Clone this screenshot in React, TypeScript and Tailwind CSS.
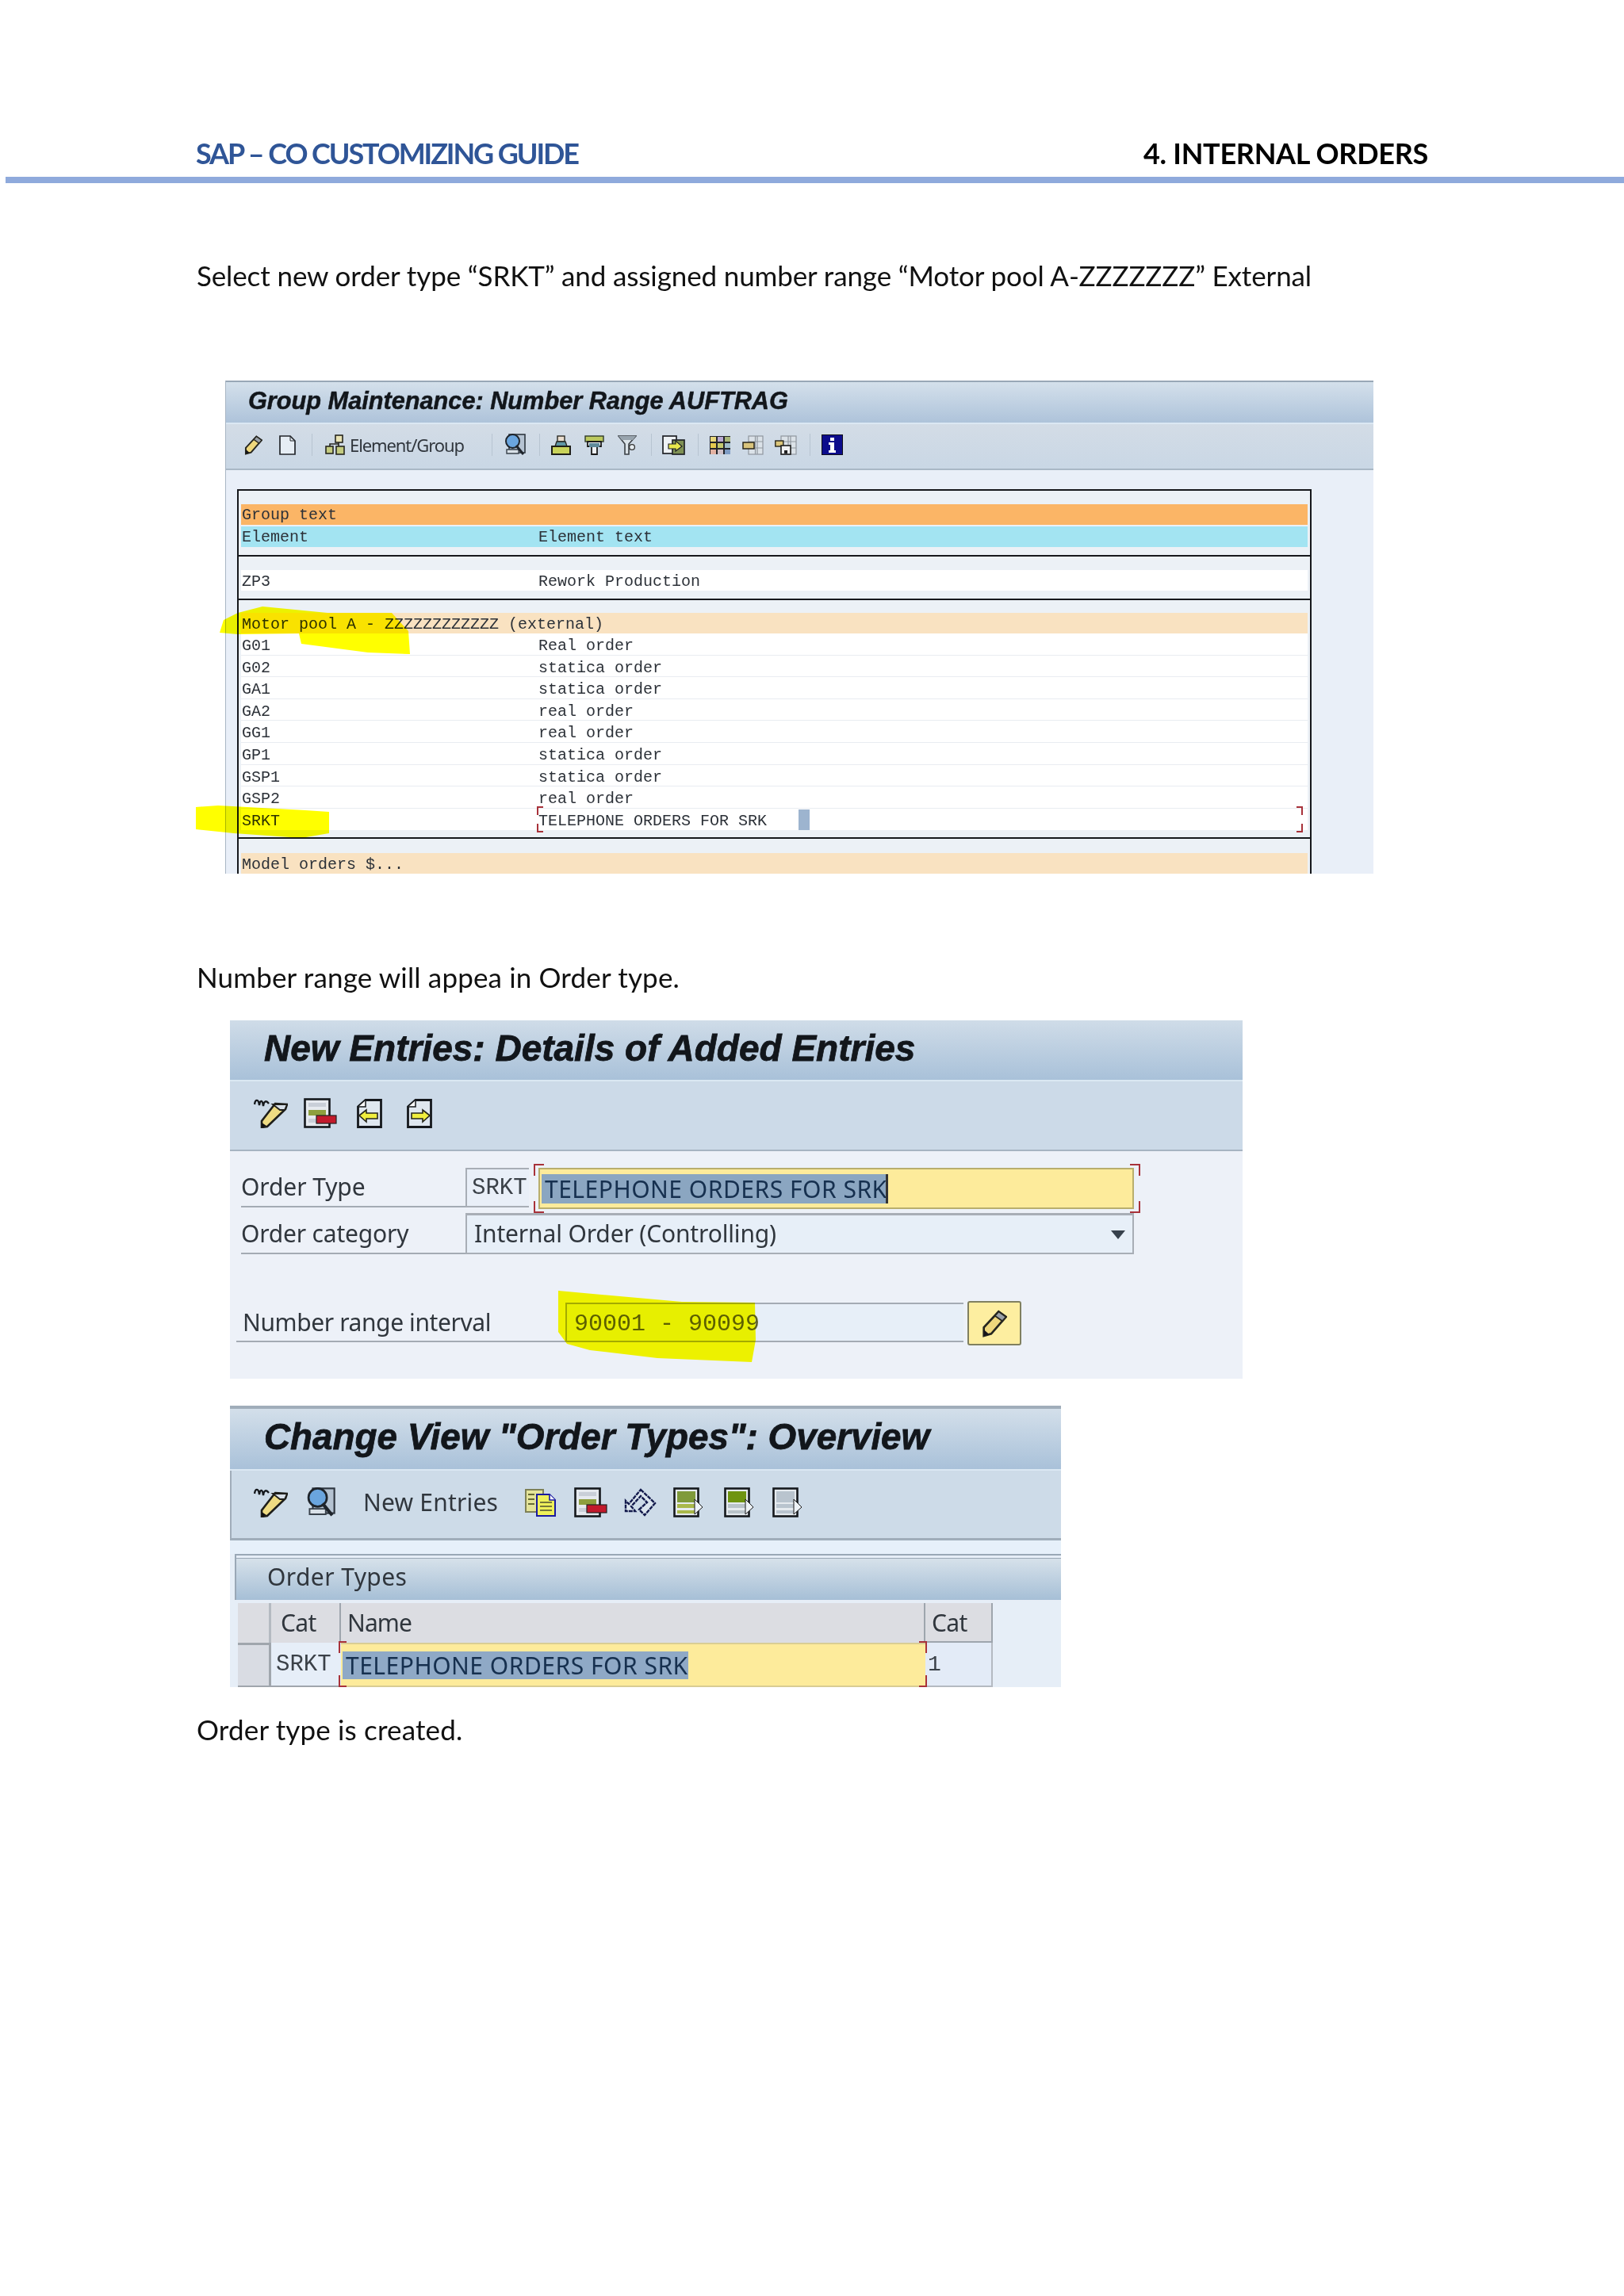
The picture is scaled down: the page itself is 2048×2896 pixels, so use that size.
import React from "react";

const Ic = ({ w, h, vb, className = "", children }: { w: number; h: number; vb?: string; className?: string; children: React.ReactNode }) => (
  <svg width={w} height={h} viewBox={vb ?? `0 0 ${w} ${h}`} className={`shrink-0 ${className}`}>{children}</svg>
);

const K = "#15181c";

const Pencil = ({ w, h, className }: { w: number; h: number; className?: string }) => (
  <Ic w={w} h={h} vb="0 0 24 26" className={className}>
    <path d="M16 2 L23 7 L9 23 L2 25 L2 17 Z" fill="#eed77c" stroke="#26261f" strokeWidth="2" />
    <path d="M16 2 L23 7 L19.5 11 L12.5 6 Z" fill="#9aa0a7" stroke="#26261f" strokeWidth="1.4" />
    <path d="M2 25 L2 19 L7 23.5 Z" fill="#16161a" />
  </Ic>
);
const Sep = ({ className }: { className: string }) => <div className={`w-px h-[28px] bg-[#b7c4d1] shrink-0 ${className}`} />;

const Wand = ({ className }: { className?: string }) => (
  <Ic w={43} h={38} vb="0 0 43 38" className={className}>
    <path d="M1 8 C2 1 6 1 7 9 C8 2 11 2 12 10 C13 3 16 3 19 7" fill="none" stroke="#15181c" strokeWidth="2.4" />
    <path d="M27 7 L42 8 L40 14 L17 36 L10 37 L10 29 Z" fill="#eedb82" stroke="#1e1e1a" strokeWidth="2.6" />
    <path d="M24 8 L42 8 L39 15 L33 15 Z" fill="#d7dfe8" stroke="#1e1e1a" strokeWidth="1.8" />
    <path d="M10 37 L10 31 L16 35 Z" fill="#111" />
  </Ic>
);
const Glass = ({ w, h, className }: { w: number; h: number; className?: string }) => (
  <Ic w={w} h={h} vb="0 0 28 28" className={className}>
    <rect x="7" y="1" width="20" height="23" fill="#b5c3d2" stroke="#2f3740" strokeWidth="1.6" />
    <circle cx="11.5" cy="9.5" r="8.5" fill="#6aa5de" stroke="#1e242b" strokeWidth="2" />
    <path d="M4 20 H19 V25 H4 Z" fill="#d9e1e8" stroke="#39424b" strokeWidth="1.4" />
    <path d="M16 15 L25 26" stroke="#1e242b" strokeWidth="3" />
  </Ic>
);
const Del = ({ className }: { className?: string }) => (
  <Ic w={42} h={38} vb="0 0 42 38" className={className}>
    <rect x="1.5" y="1.5" width="31" height="35" fill="#e6eaef" stroke={K} strokeWidth="2.6" />
    <rect x="6" y="6" width="22" height="5" fill="#c9cfd8" />
    <rect x="6" y="15" width="22" height="7" fill="#8e9f3e" />
    <rect x="6" y="26" width="12" height="5" fill="#c9cfd8" />
    <rect x="16" y="22" width="25" height="10" fill="#c21a2c" stroke="#222" strokeWidth="1.2" />
  </Ic>
);
const DocArrow = ({ left, className }: { left?: boolean; className?: string }) => (
  <Ic w={32} h={37} vb="0 0 32 37" className={className}>
    <path d="M11 1.5 H30.5 V35.5 H1.5 V10 Z" fill="#dfe7ef" stroke={K} strokeWidth="2.8" />
    <path d="M11 2 V10 H2" fill="#fff" stroke={K} strokeWidth="1.5" />
    {left ? (
      <path d="M3 21 L12 14 V18 H26 V25 H12 V29 Z" fill="#f0ee3e" stroke="#26261c" strokeWidth="1.6" />
    ) : (
      <path d="M29 21 L20 14 V18 H6 V25 H20 V29 Z" fill="#f0ee3e" stroke="#26261c" strokeWidth="1.6" />
    )}
  </Ic>
);
const ListArrow = ({ top, bottom, className }: { top: string; bottom: string; className?: string }) => (
  <Ic w={38} h={38} vb="0 0 38 38" className={className}>
    <rect x="1.5" y="1.5" width="30" height="35" fill="#e6ebef" stroke={K} strokeWidth="2.6" />
    <rect x="5" y="5" width="23" height="14" fill={top} />
    <rect x="5" y="21" width="23" height="5" fill={bottom} />
    <rect x="5" y="29" width="23" height="4" fill={bottom} />
    <path d="M27 15 L37 25 L27 34 Z" fill="#eef3f7" stroke="#1a1a1a" strokeWidth="1" />
  </Ic>
);
const CopyDoc = ({ className }: { className?: string }) => (
  <Ic w={40} h={35} vb="0 0 40 35" className={className}>
    <rect x="1" y="1" width="22" height="28" fill="#e4e398" stroke="#7f8157" strokeWidth="2" />
    <path d="M4 7 H12 M4 13 H12 M4 19 H12" stroke="#676a34" strokeWidth="2" />
    <path d="M15 7 H31 L38 14 V34 H15 Z" fill="#eff05a" stroke="#1a1aa0" strokeWidth="2" />
    <path d="M31 7 V14 H38" fill="#fff" stroke="#1a1aa0" strokeWidth="1.6" />
    <path d="M19 17 H34 M19 22 H34 M19 27 H34" stroke="#77783a" strokeWidth="2" />
  </Ic>
);
const Undo = ({ className }: { className?: string }) => (
  <Ic w={41} h={38} vb="0 0 41 38" className={className}>
    <path d="M21 3 L39 20 L26 35 L19 28 L29 19 L21 11 L9 24 L14 30 H2 V17 L6 21 Z" fill="#dbe5ee" stroke="#131a4c" strokeWidth="2.4" strokeDasharray="5 1" />
  </Ic>
);

const Hierarchy = ({ className }: { className?: string }) => (
  <Ic w={26} h={26} className={className}>
    <rect x="13" y="1" width="9" height="9" fill="#e9e3b4" stroke="#26261f" strokeWidth="1.6" />
    <rect x="14" y="15" width="10" height="10" fill="#c4cb80" stroke="#26261f" strokeWidth="1.6" />
    <rect x="1" y="15" width="9" height="9" fill="#c4cb80" stroke="#26261f" strokeWidth="1.6" />
    <path d="M17 10 V15 M6 15 V12 H17" stroke="#26261f" strokeWidth="1.6" fill="none" />
  </Ic>
);
const Printer = ({ className }: { className?: string }) => (
  <Ic w={25} h={25} className={className}>
    <rect x="8" y="1" width="9" height="7" fill="#e9ddce" stroke="#2a2a24" strokeWidth="1.4" />
    <path d="M7 8 H18 L20 14 H5 Z" fill="#5f96a5" stroke="#2a2a24" strokeWidth="1.4" />
    <rect x="1" y="14" width="23" height="10" fill="#c9d35a" stroke="#1f1f18" strokeWidth="2" />
  </Ic>
);
const Funnel = ({ className }: { className?: string }) => (
  <Ic w={25} h={25} className={className}>
    <rect x="1" y="1" width="23" height="7" fill="#bcc95e" stroke="#2f3a2a" strokeWidth="1.4" />
    <path d="M4 8 H21 V14 H16 V24 H9 V14 H4 Z" fill="#eef1f3" stroke="#1c1c1c" strokeWidth="1.8" />
    <rect x="6" y="10" width="13" height="5" fill="#5f8a9a" />
  </Ic>
);
const Filter = ({ className }: { className?: string }) => (
  <Ic w={24} h={25} className={className}>
    <path d="M1 1 H23 L14 11 V24 H9 V11 Z" fill="#dbe3e8" stroke="#3a3f44" strokeWidth="1.6" />
    <path d="M1 1 H23 L19 6 H5 Z" fill="#98a4ad" />
    <circle cx="18" cy="15" r="3.4" fill="#e5ebef" stroke="#333" strokeWidth="1.3" />
  </Ic>
);
const Export = ({ className }: { className?: string }) => (
  <Ic w={29} h={25} className={className}>
    <rect x="1" y="1" width="17" height="22" fill="#eef2f5" stroke="#1f2126" strokeWidth="1.7" />
    <rect x="13" y="6" width="15" height="18" fill="#7f9154" stroke="#1f2126" strokeWidth="1.7" />
    <path d="M8 11 H17 V7 L25 14 L17 20 V17 H8 Z" fill="#e8e84c" stroke="#1f2126" strokeWidth="1.2" />
  </Ic>
);
const Grid = ({ className }: { className?: string }) => (
  <Ic w={28} h={25} className={className}>
    <rect x="1" y="1" width="26" height="23" fill="#22242a" />
    {[
      ["#e7d77c", 2, 2], ["#b8a8d2", 11, 2], ["#a8b679", 20, 2],
      ["#e4c94e", 2, 10], ["#c3c96e", 11, 10], ["#9fbcc9", 20, 10],
      ["#e3b2a2", 2, 18], ["#cfc1c8", 11, 18], ["#7f9cc4", 20, 18],
    ].map(([c, x, y], i) => <rect key={i} x={x as number} y={y as number} width="7" height="6" fill={c as string} />)}
  </Ic>
);
const FadedGrid = ({ w, save, className }: { w: number; save?: boolean; className?: string }) => (
  <Ic w={w} h={25} className={className}>
    <rect x="8" y="1" width={w - 9} height="23" fill="#dbe2e8" stroke="#8f979e" strokeWidth="1.2" />
    <path d={`M8 8 H${w - 1} M8 16 H${w - 1} M${w / 2 + 3} 1 V24 M${w - 8} 1 V24`} stroke="#8f979e" strokeWidth="1.2" />
    {save ? (
      <>
        <rect x="0.8" y="7" width="10" height="7" fill="#dcc67a" stroke="#27251a" strokeWidth="1.4" />
        <rect x="8" y="13" width="12" height="11" fill="#f0f2f4" stroke="#1f1f1f" strokeWidth="1.6" />
        <rect x="12" y="19" width="4" height="4" fill="#222" />
      </>
    ) : (
      <rect x="1" y="9" width="14" height="8" fill="#d9c47c" stroke="#27251a" strokeWidth="1.5" />
    )}
  </Ic>
);
const Info = ({ className }: { className?: string }) => (
  <Ic w={27} h={26} className={className}>
    <rect x="0" y="0" width="27" height="26" fill="#0c0c8c" stroke="#101018" strokeWidth="2" />
    <path d="M11 4 H16 V8 H11 Z M9 10 H16 V20 H18 V23 H9 V20 H11 V13 H9 Z" fill="#fff" />
  </Ic>
);
const BlankDoc = ({ className }: { className?: string }) => (
  <Ic w={21} h={25} className={className}>
    <path d="M1 1 H14 L20 7 V24 H1 Z" fill="#e6edf4" stroke="#23262b" strokeWidth="1.7" />
    <path d="M14 1 V7 H20" fill="none" stroke="#23262b" strokeWidth="1" />
  </Ic>
);

const Bracket = ({ side, className, arm }: { side: "l" | "r"; className: string; arm: string }) => {
  const s = side === "l" ? "border-l-2" : "border-r-2";
  return (
    <div className={`absolute flex flex-col justify-between ${className}`}>
      <div className={`${arm} ${s} border-t-2 border-[#a8323a]`} />
      <div className={`${arm} ${s} border-b-2 border-[#a8323a]`} />
    </div>
  );
};

const rows: [string, string][] = [
  ["G01", "Real order"],
  ["G02", "statica order"],
  ["GA1", "statica order"],
  ["GA2", "real order"],
  ["GG1", "real order"],
  ["GP1", "statica order"],
  ["GSP1", "statica order"],
  ["GSP2", "real order"],
];

const mono = "font-['Liberation_Mono',monospace] text-[20px] leading-[28px] text-[#2c3138]";
const ui = "font-['Noto_Sans',sans-serif] text-[#30363d]";
const title = "font-['Liberation_Sans',sans-serif] font-bold italic text-[#12161b] whitespace-nowrap";
const body = "font-['Lato',sans-serif] text-[35px] leading-[40px] text-[#111] ml-[248px] whitespace-pre";

const Row = ({ a, b, cls }: { a: string; b: string; cls: string }) => (
  <div className={`flex ${cls}`}>
    <span className="w-[375px] pl-[1px]">{a}</span>
    <span>{b}</span>
  </div>
);

export default function App() {
  return (
    <div className="relative w-[2048px] h-[2896px] bg-white overflow-hidden flex flex-col">
      {/* page header */}
      <div className="h-[223px] flex items-end justify-between pl-[247px] pr-[247px] pb-[10px] font-['Lato',sans-serif] font-bold text-[36px] leading-[40px] whitespace-nowrap">
        <span className="text-[#2f5597] tracking-[-2.1px]">SAP – CO CUSTOMIZING GUIDE</span>
        <span className="text-black tracking-[-0.3px]">4. INTERNAL ORDERS</span>
      </div>
      <div className="ml-[7px] h-[8px] bg-[#8faadc] shrink-0" />

      <p className={`${body} mt-[96px] tracking-[-0.12px]`}>Select new order type “SRKT” and assigned number range “Motor pool A-ZZZZZZZ” External</p>

      {/* Panel 1 */}
      <section className="mt-[113px] ml-[284px] w-[1448px] h-[622px] overflow-hidden shrink-0 bg-[#e9eff8] flex flex-col border-l border-[#a9b6c4]">
        <div className="h-[55px] shrink-0 border-t-2 border-[#98a7b6] border-b-2 border-b-[#dbe8f3] bg-linear-to-b from-[#d4e0eb] to-[#aec3da] flex items-center pl-[28px] pb-[3px]">
          <h2 className={`${title} text-[30.7px] [-webkit-text-stroke:0.5px_#12161b]`}>Group Maintenance: Number Range AUFTRAG</h2>
        </div>
        <div className="h-[58px] shrink-0 border-b-2 border-[#a9b8c6] bg-linear-to-b from-[#d3dce6] to-[#c9d7e5] flex items-center pl-[23px] pb-[4px]">
          <Pencil w={23} h={26} />
          <BlankDoc className="ml-[21px]" />
          <Sep className="ml-[20px]" />
          <Hierarchy className="ml-[16px]" />
          <span className={`${ui} ml-[5px] w-[143px] text-[22px] leading-[26px] tracking-[-1.1px] whitespace-nowrap`}>Element/Group</span>
          <Sep className="ml-[36px]" />
          <Glass w={28} h={28} className="ml-[14px]" />
          <Sep className="ml-[17px]" />
          <Printer className="ml-[14px]" />
          <Funnel className="ml-[17px]" />
          <Filter className="ml-[17px]" />
          <Sep className="ml-[18px]" />
          <Export className="ml-[13px]" />
          <Sep className="ml-[16px]" />
          <Grid className="ml-[13px]" />
          <FadedGrid w={27} className="ml-[14px]" />
          <FadedGrid w={28} save className="ml-[14px]" />
          <Sep className="ml-[16px]" />
          <Info className="ml-[14px]" />
        </div>
        <div className="mt-[24px] ml-[14px] w-[1355px] border-x-2 border-t-2 border-[#16181c] bg-[#ecf1f6] shrink-0">
          <div className="px-[3px] pt-[17px] pb-[10px] border-b-2 border-[#16181c]">
            <div className={`${mono} h-[26px] bg-[#fbb566]`}><span className="pl-[1px]">Group text</span></div>
            <Row a="Element" b="Element text" cls={`${mono} mt-[2px] h-[26px] bg-[#a3e4f2]`} />
          </div>
          <div className="px-[3px] pt-[17px] pb-[10px] border-b-2 border-[#16181c]">
            <Row a="ZP3" b="Rework Production" cls={`${mono} h-[26px] bg-white leading-[30px]`} />
          </div>
          <div className="px-[3px] pt-[16px] pb-[9px] border-b-2 border-[#16181c]">
            <div className={`${mono} h-[26px] bg-[#f9e2c1] pl-[1px] whitespace-pre leading-[30px]`}>Motor pool A - ZZZZZZZZZZZZ (external)</div>
            {rows.map(([a, b]) => (
              <Row key={a} a={a} b={b} cls={`${mono} h-[27.6px] bg-white border-b border-[#e9ecf1] leading-[31px]`} />
            ))}
            <div className={`${mono} relative flex h-[27.6px] bg-white leading-[31px]`}>
              <span className="w-[375px] pl-[1px]">SRKT</span>
              <span>TELEPHONE ORDERS FOR SRK</span>
              <div className="absolute left-[703px] top-[1px] w-[14px] h-[26px] bg-[#9db4cf]" />
              <Bracket side="l" arm="w-[8px] h-[11px]" className="left-[373px] -top-[3px] h-[33px]" />
              <Bracket side="r" arm="w-[8px] h-[11px]" className="left-[1331px] -top-[3px] h-[33px]" />
            </div>
          </div>
          <div className="px-[3px] pt-[18px]">
            <div className={`${mono} h-[26px] bg-[#f9e2c1] pl-[1px] leading-[30px]`}>Model orders $...</div>
          </div>
        </div>
      </section>

      <p className={`${body} mt-[110px] tracking-[0.15px]`}>Number range will appea in Order type.</p>

      {/* Panel 2 */}
      <section className="mt-[35px] ml-[290px] w-[1277px] h-[452px] shrink-0 bg-[#edf1f8] flex flex-col">
        <div className="h-[77px] shrink-0 border-b-2 border-[#dbe8f3] bg-linear-to-b from-[#cfdce8] to-[#a9c1d9] flex items-center pl-[43px] pb-[4px]">
          <h2 className={`${title} text-[46px] [-webkit-text-stroke:0.8px_#12161b]`}>New Entries: Details of Added Entries</h2>
        </div>
        <div className="h-[88px] shrink-0 border-b-2 border-[#a6b4c2] bg-[#ccdae8] flex items-center pl-[30px] pb-[6px]">
          <Wand />
          <Del className="ml-[20px]" />
          <DocArrow left className="ml-[25px]" />
          <DocArrow className="ml-[31px]" />
        </div>
        <div className="relative mt-[21px] flex items-end h-[50px] shrink-0 ml-[15px]">
          <span className={`${ui} w-[283px] text-[30px] leading-[44px] pb-[2px] -ml-[1px] border-b-2 border-[#a4abb4] tracking-[-0.1px]`}>Order Type</span>
          <div className="w-[80px] h-[50px] bg-[#e9eff8] border-t-2 border-l-2 border-[#a8aeb6] border-b-2 font-['Liberation_Mono',monospace] text-[29px] leading-[48px] text-[#3b4148] pl-[6px]">SRKT</div>
          <div className="ml-[12px] w-[751px] h-[52px] -mb-[2px] bg-[#fdeb9b] border-2 border-[#b9ae6d] relative flex items-center pl-[2px]">
            <span className="bg-[#8ba6c1] text-[#16304f] font-['Noto_Sans',sans-serif] text-[30px] leading-[37px] h-[37px] w-[437px] pl-[4px] border-r-[3px] border-[#333] whitespace-nowrap tracking-[0.5px]">TELEPHONE ORDERS FOR SRK</span>
          </div>
          <Bracket side="l" arm="w-[13px] h-[15px]" className="left-[368px] -top-[5px] h-[62px]" />
          <Bracket side="r" arm="w-[13px] h-[15px]" className="left-[1120px] -top-[5px] h-[62px]" />
        </div>
        <div className="mt-[7px] flex items-end h-[52px] shrink-0 ml-[15px]">
          <span className={`${ui} w-[283px] text-[30px] leading-[44px] pb-[2px] -ml-[1px] border-b-2 border-[#a4abb4] tracking-[-0.2px]`}>Order category</span>
          <div className="w-[843px] h-[52px] bg-[#e7eff8] border-2 border-t-[3px] border-[#a8aeb6] flex items-center justify-between pl-[9px] pr-[9px]">
            <span className={`${ui} text-[30px] leading-[40px] -mt-[2px] tracking-[-0.15px]`}>Internal Order (Controlling)</span>
            <svg width="18" height="14" viewBox="0 0 18 14"><path d="M0 2 H18 L9 13 Z" fill="#37414c" /></svg>
          </div>
        </div>
        <div className="mt-[59px] flex items-end ml-[8px] h-[56px] shrink-0">
          <span className={`${ui} w-[415px] pl-[8px] text-[30px] leading-[46px] border-b-2 border-[#a4abb4] tracking-[-0.4px] mb-[4px]`}>Number range interval</span>
          <div className="w-[502px] h-[50px] mb-[4px] bg-[#e7eff8] border-t-2 border-l-2 border-b-2 border-[#a4abb4] font-['Liberation_Mono',monospace] text-[30px] leading-[50px] text-[#5c5f28] pl-[9px]">90001 - 90099</div>
          <div className="ml-[5px] w-[68px] h-[56px] bg-[#fdeea0] border-2 border-[#80805f] rounded-[3px] flex items-center justify-center">
            <Pencil w={32} h={38} />
          </div>
        </div>
      </section>

      {/* Panel 3 */}
      <section className="mt-[34px] ml-[290px] w-[1048px] h-[355px] shrink-0 bg-[#e6eef7] flex flex-col">
        <div className="h-[82px] shrink-0 border-t-4 border-[#a0adba] border-b-2 border-b-[#dbe8f3] bg-linear-to-b from-[#d3dfea] to-[#a9c1d9] flex items-center pl-[43px] pb-[4px]">
          <h2 className={`${title} text-[45.8px] [-webkit-text-stroke:0.8px_#12161b]`}>Change View "Order Types": Overview</h2>
        </div>
        <div className="h-[88px] shrink-0 border-b-[3px] border-l-2 border-[#a0adba] bg-[#cddbe8] flex items-center pl-[28px] pb-[5px]">
          <Wand />
          <Glass w={40} h={38} className="ml-[21px]" />
          <span className={`${ui} ml-[34px] w-[172px] text-[30px] leading-[40px] tracking-[0.2px] whitespace-nowrap`}>New Entries</span>
          <CopyDoc className="ml-[32px]" />
          <Del className="ml-[22px]" />
          <Undo className="ml-[21px]" />
          <ListArrow top="#7f9a3a" bottom="#a9b84a" className="ml-[21px]" />
          <ListArrow top="#6f9410" bottom="#b9c3c9" className="ml-[26px]" />
          <ListArrow top="#b9c4ce" bottom="#b9c4ce" className="ml-[23px]" />
        </div>
        <div className="h-[17px] shrink-0 bg-[#e6f0fa]" />
        <div className="h-[58px] shrink-0 ml-[6px] border-t-2 border-l-2 border-[#9aa8b6] pt-[3px]">
          <div className="h-[53px] border-t border-[#9aa8b6] bg-linear-to-b from-[#d6e1ea] to-[#a6bfd6] flex items-center pl-[39px] pb-[6px]">
            <span className={`${ui} text-[30px] leading-[40px] tracking-[0.4px]`}>Order Types</span>
          </div>
        </div>
        <div className="ml-[10px] mt-[4px] grid grid-cols-[42px_88px_737px_85px] grid-rows-[50px_56px] w-[952px]">
          <div className="bg-[#dcdde2] border-r-[3px] border-[#b4bac1]" />
          <div className={`${ui} bg-[#dcdde2] border-r-2 border-[#9ea5ad] pl-[12px] text-[30px] leading-[50px] tracking-[-0.6px]`}>Cat</div>
          <div className={`${ui} bg-[#dcdde2] border-r-2 border-[#9ea5ad] pl-[8px] text-[30px] leading-[50px] tracking-[-0.9px]`}>Name</div>
          <div className={`${ui} bg-[#dcdde2] border-r-2 border-[#9ea5ad] pl-[8px] text-[30px] leading-[50px] tracking-[-0.6px] border-b-2`}>Cat</div>
          <div className="bg-[#d9dce3] border-t-[3px] border-b-2 border-[#a0a6ad] border-r-[3px]" />
          <div className="bg-[#e6eef8] border-b-2 border-[#a0a6ad] pl-[6px] font-['Liberation_Mono',monospace] text-[29px] leading-[56px] text-[#3b4148]">SRKT</div>
          <div className="relative bg-[#fdeb9b] border-t-2 border-b-2 border-[#d9cd93] pt-[9px] pl-[2px]">
            <span className="block w-[436px] h-[35px] bg-[#8fa9c6] pl-[4px] font-['Noto_Sans',sans-serif] text-[30px] leading-[35px] text-[#16304f] tracking-[0.5px] whitespace-nowrap">TELEPHONE ORDERS FOR SRK</span>
            <Bracket side="l" arm="w-[10px] h-[15px]" className="-left-[3px] -top-[4px] h-[58px]" />
            <Bracket side="r" arm="w-[10px] h-[15px]" className="left-[729px] -top-[4px] h-[58px]" />
          </div>
          <div className="bg-[#e3ebf7] border-r-2 border-b-2 border-[#b4bac1] pl-[3px] font-['Liberation_Mono',monospace] text-[28px] leading-[56px] text-[#3b4148]">1</div>
        </div>
      </section>

      <p className={`${body} mt-[33px] tracking-[0.15px]`}>Order type is created.</p>

      {/* highlighter strokes laid over the screenshots */}
      <svg width="2048" height="2896" viewBox="0 0 2048 2896" className="absolute left-0 top-0 pointer-events-none mix-blend-multiply">
        <path d="M277 798 L282 782 L300 773 L331 765 L413 773 L494 773 L515 796 L517 825 L464 823 L380 812 L377 799 L300 800 Z" fill="#ffff00" />
        <path d="M247 1018 L275 1016 L385 1022 L415 1024 L415 1051 L380 1057 L295 1051 L247 1046 Z" fill="#ffff00" />
        <path d="M704 1628 L860 1642 L952 1643 L953 1690 L948 1718 L829 1713 L744 1703 L715 1695 L704 1680 Z" fill="#ffff00" />
      </svg>
    </div>
  );
}
